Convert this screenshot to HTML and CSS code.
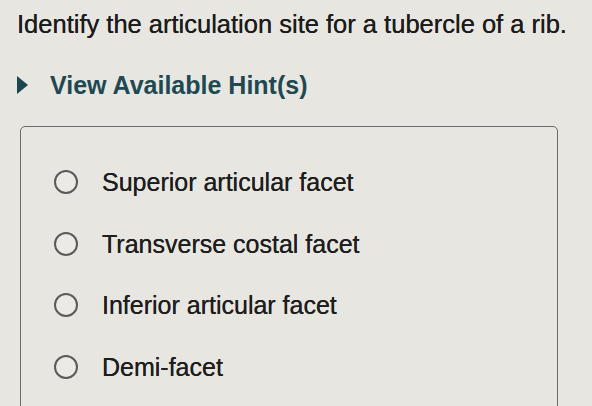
FILE: index.html
```html
<!DOCTYPE html>
<html lang="en">
<head>
<meta charset="utf-8">
<title>Question</title>
<link rel="stylesheet" href="styles.css">
</head>
<body>
<div class="page">
  <p class="question">Identify the articulation site for a tubercle of a rib.</p>
  <div class="hint">
    <span class="caret"></span>
    <span class="hint-label">View Available Hint(s)</span>
  </div>
  <div class="choices">
    <label class="choice"><span class="radio"></span><span class="choice-text">Superior articular facet</span></label>
    <label class="choice"><span class="radio"></span><span class="choice-text">Transverse costal facet</span></label>
    <label class="choice"><span class="radio"></span><span class="choice-text">Inferior articular facet</span></label>
    <label class="choice"><span class="radio"></span><span class="choice-text">Demi-facet</span></label>
  </div>
</div>
</body>
</html>
```
FILE: styles.css
```css
html, body {
  margin: 0;
  padding: 0;
  background: #e8e6e0;
  overflow: hidden;
}
.page {
  width: 592px;
  height: 406px;
  font-family: "Liberation Sans", Arial, sans-serif;
  color: #1c1c1c;
  padding-top: 9px;
  box-sizing: border-box;
  overflow: hidden;
}
.question {
  margin: 0 0 0 17px;
  font-size: 25.5px;
  line-height: 30px;
  white-space: nowrap;
  text-shadow: 0 0 0.6px #1c1c1c;
}
.hint {
  display: flex;
  align-items: center;
  margin: 31px 0 0 17px;
  height: 30px;
}
.caret {
  width: 0;
  height: 0;
  border-top: 9px solid transparent;
  border-bottom: 9px solid transparent;
  border-left: 11px solid #1d4750;
  margin-right: 22px;
}
.hint-label {
  font-size: 25px;
  line-height: 30px;
  font-weight: bold;
  color: #1e4852;
}
.choices {
  margin: 26px 0 0 20px;
  width: 538px;
  box-sizing: border-box;
  border: 1px solid #6a6a68;
  border-radius: 5px;
  padding: 40px 0 30px 33px;
  display: flex;
  flex-direction: column;
  gap: 31.5px;
}
.choice {
  display: flex;
  align-items: center;
  height: 30px;
}
.radio {
  width: 24px;
  height: 24px;
  box-sizing: border-box;
  border: 2px solid #5a5a5a;
  border-radius: 50%;
  background: #eceae5;
  margin-right: 24px;
  flex: none;
}
.choice-text {
  font-size: 25px;
  line-height: 30px;
  color: #1e1e1e;
  white-space: nowrap;
  text-shadow: 0 0 0.5px #1e1e1e;
}
```
